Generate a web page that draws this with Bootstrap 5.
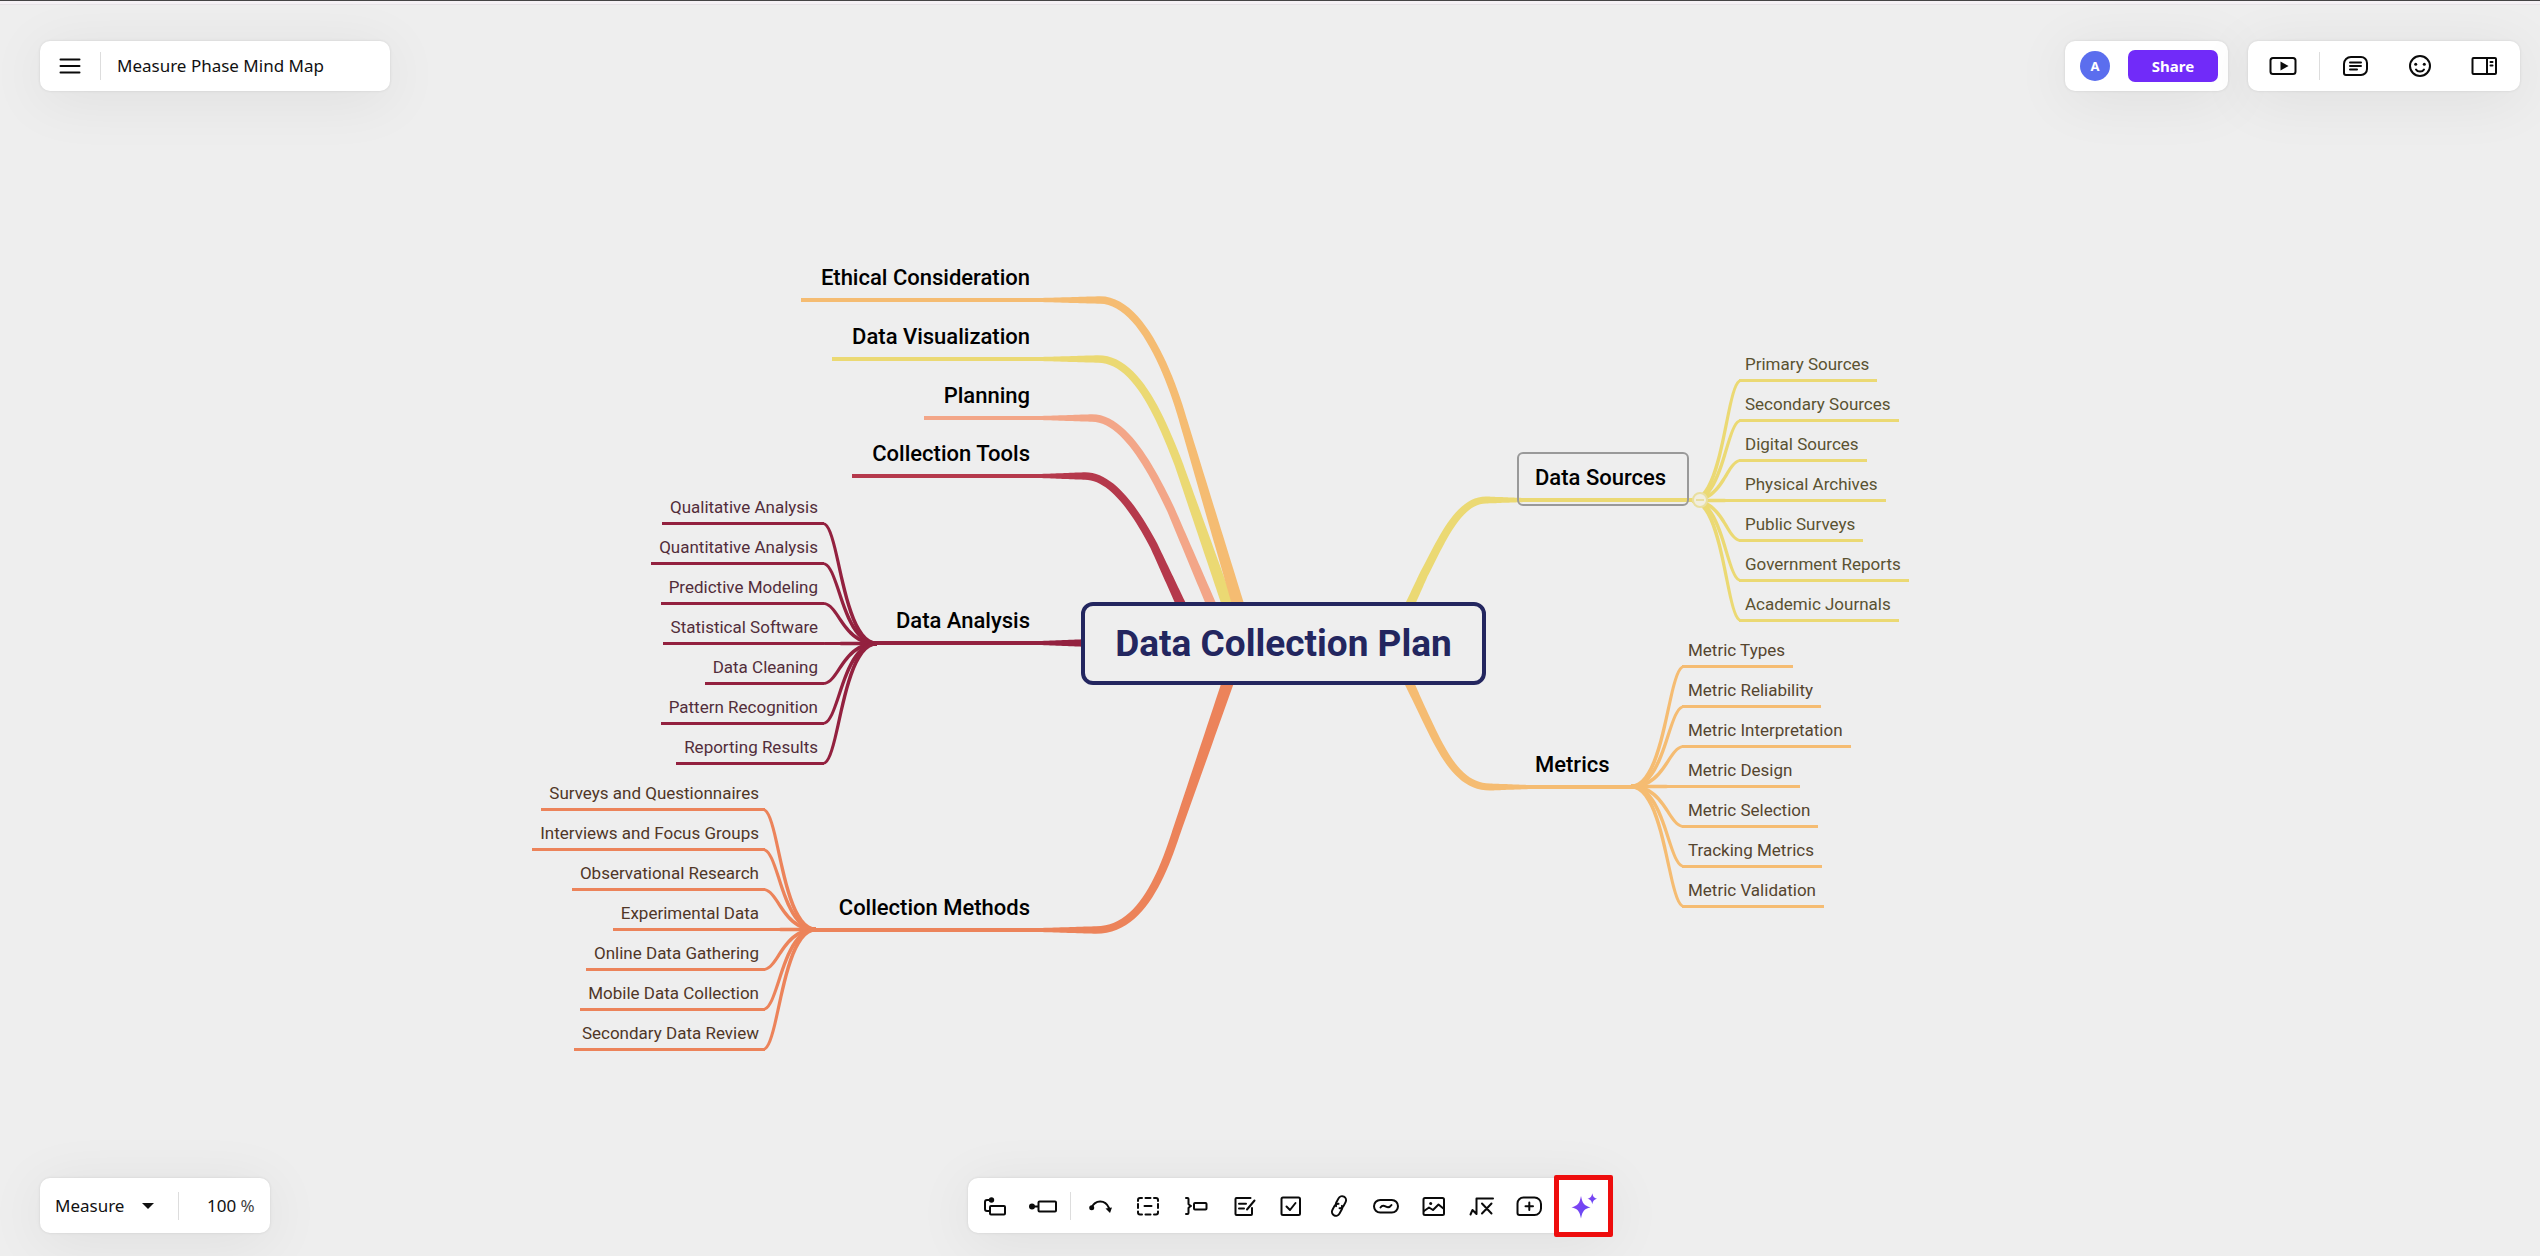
<!DOCTYPE html>
<html lang="en">
<head>
<meta charset="utf-8">
<meta name="viewport" content="width=device-width, initial-scale=1">
<title>Measure Phase Mind Map</title>
<link href="https://cdn.jsdelivr.net/npm/bootstrap@5.3.0/dist/css/bootstrap.min.css" rel="stylesheet">
<style>
  body { background: #eee; color: #111; font-family: "Noto Sans", "Open Sans", sans-serif; font-size: 17px; line-height: 24px; }
  .app { overflow: hidden; }
  .top-strip { height: 5px; border-top: 1px solid #444; background: #f5f1f5; border-bottom: 1px solid #e6e2e6; }
  .app-header { padding: 36px 20px 1px 40px; }
  .app-footer { display: grid; grid-template-columns: 1fr auto 1fr; padding: 0 0 23px 40px; }
  .app-header, .app-footer { z-index: 2; }
  .panel { background: #fff; border-radius: 10px; box-shadow: 0 0 3px rgba(0,0,0,.1), 0 8px 60px rgba(0,0,0,.07); }
  .app-header .panel { height: 50px; }
  .app-footer .panel { height: 55px; }
  .title-panel { width: 350px; }
  .header-right { gap: 20px; }
  .share-panel { width: 163px; padding: 0 10px 0 15px; }
  .view-panel { padding: 0 4px 0 3px; }
  .sheet-panel { width: 230px; }
  .edit-panel { width: 644px; padding-left: 3px; }
  .vline { width: 1px; height: 28px; background: #ddd; flex: none; }
  .edit-line { margin: 0 6px 0 3px; }
  .doc-title { font-size: 17px; line-height: 24px; margin: 0; font-weight: 400; }
  .tool { border: 0; padding: 0; border-radius: 6px; color: #111; display: flex; align-items: center; justify-content: center; height: 44px; flex: none; }
  .tool svg { fill: none; stroke: #0a0a0a; stroke-width: 2; stroke-linecap: round; stroke-linejoin: round; }
  .tool .solid { fill: #0a0a0a; stroke: none; }
  .menu-tool { width: 60px; }
  .view-tool { width: 64px; }
  .edit-tool { width: 48px; }
  .insert-tools { width: 476px; flex: none; }
  .ai-tool { width: 59px; height: 62px; margin: 0 -1px 0 1px; border: 5px solid #ee0d0d; border-radius: 2px; background: #fff; }
  .ai-tool svg { stroke: none; }
  .avatar { width: 30px; height: 30px; background: #5b6eee; color: #fff; font-size: 13px; font-weight: 700; }
  .btn-share { width: 90px; height: 32px; padding: 0; border-radius: 7px; background: #712bf9; color: #fff; font-size: 15px; font-weight: 700; border: 0; }
  .btn-share:hover { background: #5f1fe0; color: #fff; }
  .sheet-select { appearance: none; border: 0; background: none; padding: 0 0 0 15px; width: 138px; height: 44px; color: #111; }
  .sheet-caret { position: absolute; left: 102px; top: 18px; pointer-events: none; }
  .zoom-level { padding-left: 28px; }
  .zoom-level span { color: #444; }

  .world { position: absolute; left: calc(50% - 1270px); top: calc(50% - 635px); width: 0; height: 0; font-family: Roboto, sans-serif; }
  .world svg { position: absolute; left: 0; top: 0; overflow: visible; }
  .map-node { position: absolute; white-space: nowrap; }
  .root-node { left: 1081px; top: 602px; height: 83px; width: 405px; border: 4px solid #23265f; border-radius: 12px; background: #eee; color: #23265f; font-size: 37px; line-height: 44px; font-weight: 700; }
  .topic { font-size: 22px; line-height: 28px; font-weight: 500; color: #000; padding: 2px 15px 6px; border-bottom: 4px solid var(--tone); }
  .topic-left { right: -1045px; padding-left: 20px; }
  .topic-right { left: 1520px; }
  .leaf-list { gap: 10px; width: max-content; }
  .leaf { font-size: 17px; line-height: 24px; padding: 0 6px 3px 8px; border-bottom: 3px solid var(--tone); color: var(--ink); }
  .align-items-start .leaf { padding: 0 8px 3px 6px; }
  .selected-frame { left: 1517px; top: 452px; width: 172px; height: 54px; border: 2px solid #999; border-radius: 6px; }

  .tone-sand { --tone: #f5bc72; --ink: #55452f; }
  .tone-lemon { --tone: #ebd973; --ink: #5a5231; }
  .tone-salmon { --tone: #f3a688; }
  .tone-brick { --tone: #b5394c; }
  .tone-wine { --tone: #93213f; --ink: #522d3a; }
  .tone-coral { --tone: #ec835a; --ink: #503627; }

  .at-ethical { top: 262px; }
  .at-visual { top: 321px; }
  .at-planning { top: 380px; }
  .at-tools { top: 438px; }
  .at-analysis { top: 605px; }
  .at-methods { top: 892px; }
  .at-sources { top: 462px; }
  .at-metrics { top: 749px; }
  .leaves-analysis { right: -824px; top: 495px; }
  .leaves-methods { right: -765px; top: 781px; }
  .leaves-sources { left: 1739px; top: 352px; }
  .leaves-metrics { left: 1682px; top: 638px; }
</style>
<script src="https://cdn.jsdelivr.net/npm/bootstrap@5.3.0/dist/js/bootstrap.bundle.min.js"></script>
</head>
<body>
<div class="app vh-100 d-flex flex-column position-relative">
  <div class="top-strip"></div>
  <header class="app-header d-flex justify-content-between position-relative">
    <div class="panel title-panel d-flex align-items-center">
      <button class="btn tool menu-tool" type="button" aria-label="Menu">
        <svg width="28" height="28"><path d="M4.500 7.500h19M4.500 14h19M4.500 20.500h19"/></svg>
      </button>
      <div class="vline"></div>
      <h1 class="doc-title ps-3">Measure Phase Mind Map</h1>
    </div>
    <div class="header-right d-flex">
      <div class="panel share-panel d-flex align-items-center justify-content-between">
        <span class="avatar rounded-circle d-flex align-items-center justify-content-center">A</span>
        <button class="btn btn-share" type="button">Share</button>
      </div>
      <div class="panel view-panel d-flex align-items-center">
        <button class="btn tool view-tool" type="button" aria-label="Present">
          <svg width="28" height="28"><rect x="1.500" y="6" width="25" height="16" rx="2.500"/><path class="solid" d="M11.500 9.500v9l8-4.500z"/></svg>
        </button>
        <div class="vline mx-1"></div>
        <button class="btn tool view-tool" type="button" aria-label="Comments">
          <svg width="28" height="28"><path d="M2 12a7 7 0 0 1 7-7h10a6 6 0 0 1 6 6v6a6 6 0 0 1-6 6H4a2 2 0 0 1-2-2z"/><path d="M8 10.500h11M8 14h11M8 17.500h7"/></svg>
        </button>
        <button class="btn tool view-tool" type="button" aria-label="Stickers">
          <svg width="28" height="28"><circle cx="14" cy="14" r="10"/><path d="M10 17.500c1.500 2.700 6.500 2.700 8 0"/><circle class="solid" cx="9.700" cy="12.300" r="1.500"/><circle class="solid" cx="18.300" cy="12.300" r="1.500"/></svg>
        </button>
        <button class="btn tool view-tool" type="button" aria-label="Format panel">
          <svg width="28" height="28"><rect x="2.500" y="6" width="23.500" height="16" rx="1"/><path d="M17 6v16M20.500 10h2M20.500 13.500h2"/></svg>
        </button>
      </div>
    </div>
  </header>

  <main class="flex-grow-1 position-relative">
    <div class="world">
      <svg id="links" width="1" height="1" aria-hidden="true"></svg>

      <div class="map-node topic topic-left tone-sand at-ethical">Ethical Consideration</div>
      <div class="map-node topic topic-left tone-lemon at-visual">Data Visualization</div>
      <div class="map-node topic topic-left tone-salmon at-planning">Planning</div>
      <div class="map-node topic topic-left tone-brick at-tools">Collection Tools</div>
      <div class="map-node topic topic-left tone-wine at-analysis">Data Analysis</div>
      <div class="map-node topic topic-left tone-coral at-methods">Collection Methods</div>
      <div class="map-node topic topic-right tone-lemon at-sources">Data Sources</div>
      <div class="map-node topic topic-right tone-sand at-metrics">Metrics</div>

      <div class="map-node leaf-list d-flex flex-column align-items-end tone-wine leaves-analysis">
        <div class="leaf">Qualitative Analysis</div>
        <div class="leaf">Quantitative Analysis</div>
        <div class="leaf">Predictive Modeling</div>
        <div class="leaf">Statistical Software</div>
        <div class="leaf">Data Cleaning</div>
        <div class="leaf">Pattern Recognition</div>
        <div class="leaf">Reporting Results</div>
      </div>
      <div class="map-node leaf-list d-flex flex-column align-items-end tone-coral leaves-methods">
        <div class="leaf">Surveys and Questionnaires</div>
        <div class="leaf">Interviews and Focus Groups</div>
        <div class="leaf">Observational Research</div>
        <div class="leaf">Experimental Data</div>
        <div class="leaf">Online Data Gathering</div>
        <div class="leaf">Mobile Data Collection</div>
        <div class="leaf">Secondary Data Review</div>
      </div>
      <div class="map-node leaf-list d-flex flex-column align-items-start tone-lemon leaves-sources">
        <div class="leaf">Primary Sources</div>
        <div class="leaf">Secondary Sources</div>
        <div class="leaf">Digital Sources</div>
        <div class="leaf">Physical Archives</div>
        <div class="leaf">Public Surveys</div>
        <div class="leaf">Government Reports</div>
        <div class="leaf">Academic Journals</div>
      </div>
      <div class="map-node leaf-list d-flex flex-column align-items-start tone-sand leaves-metrics">
        <div class="leaf">Metric Types</div>
        <div class="leaf">Metric Reliability</div>
        <div class="leaf">Metric Interpretation</div>
        <div class="leaf">Metric Design</div>
        <div class="leaf">Metric Selection</div>
        <div class="leaf">Tracking Metrics</div>
        <div class="leaf">Metric Validation</div>
      </div>

      <div class="map-node selected-frame"></div>
      <svg width="1" height="1" aria-hidden="true"><circle cx="1700" cy="500" r="7" fill="#f1eee0" stroke="#e9dfa0" stroke-width="2"/><path d="M1696 500h8" stroke="#e9dfa0" stroke-width="2"/></svg>
      <div class="map-node root-node d-flex align-items-center justify-content-center">Data Collection Plan</div>
    </div>
  </main>

  <footer class="app-footer position-relative">
    <div class="panel sheet-panel d-flex align-items-center">
      <div class="position-relative">
        <select class="sheet-select" aria-label="Sheet"><option>Measure</option></select>
        <svg class="sheet-caret" width="12" height="8" aria-hidden="true"><path d="M0 1h12l-6 6z" fill="#111"/></svg>
      </div>
      <div class="vline"></div>
      <div class="zoom-level">100 <span>%</span></div>
    </div>
    <div class="panel edit-panel d-flex align-items-center">
      <button class="btn tool edit-tool" type="button" aria-label="Topic">
        <svg width="28" height="28"><path d="M10 8H6a2 2 0 0 0-2 2v7a2 2 0 0 0 2 2h3"/><rect x="9" y="14" width="15" height="8.500" rx="1"/><circle class="solid" cx="10.500" cy="8" r="2.700"/></svg>
      </button>
      <button class="btn tool edit-tool" type="button" aria-label="Subtopic">
        <svg width="28" height="28"><path d="M3 14.500h6"/><rect x="9.500" y="9.500" width="17.500" height="10" rx="1"/><circle class="solid" cx="3" cy="14.500" r="3"/></svg>
      </button>
      <div class="vline edit-line"></div>
      <div class="insert-tools d-flex">
        <button class="btn tool flex-fill" type="button" aria-label="Relationship">
          <svg width="28" height="28"><path d="M4.700 15.500C8 8 18 7 22 16"/><circle class="solid" cx="4.700" cy="15.700" r="2.500"/><path class="solid" d="M18.500 16.500l6.500-1-2 5.500z"/></svg>
        </button>
        <button class="btn tool flex-fill" type="button" aria-label="Boundary">
          <svg width="28" height="28"><path d="M4 9V8a2 2 0 0 1 2-2h2M11.500 6h5M20 6h2a2 2 0 0 1 2 2v1M24 12v4M24 19.500v1a2 2 0 0 1-2 2h-2M16.500 22.500h-5M8 22.500H6a2 2 0 0 1-2-2v-1M4 16v-4M10.500 14h7"/></svg>
        </button>
        <button class="btn tool flex-fill" type="button" aria-label="Summary">
          <svg width="28" height="28"><path d="M4 6h1.500a1 1 0 0 1 1 1v5l2 2-2 2v5a1 1 0 0 1-1 1H4M8 14h1"/><rect x="12" y="11" width="12.500" height="6.500" rx="1"/></svg>
        </button>
        <button class="btn tool flex-fill" type="button" aria-label="Note">
          <svg width="28" height="28"><path d="M20.500 6h-14a1 1 0 0 0-1 1v15a1 1 0 0 0 1 1H21a1 1 0 0 0 1-1v-6M9 11.700h7M9 16.500h5M24.500 8.500L17 17.500"/></svg>
        </button>
        <button class="btn tool flex-fill" type="button" aria-label="To-do">
          <svg width="28" height="28"><rect x="4.500" y="5.500" width="18.500" height="17.500" rx="1.500"/><path d="M9.500 14.500l3.500 3.500 5.500-7"/></svg>
        </button>
        <button class="btn tool flex-fill" type="button" aria-label="Link">
          <svg width="28" height="28"><g transform="rotate(28 14 14)"><path d="M11.500 15.500a4 4 0 0 1-1.500-3V7.500a4 4 0 0 1 8 0v4.500a4 4 0 0 1-2.500 3.700"/><path d="M16.500 12.500a4 4 0 0 1 1.500 3v5a4 4 0 0 1-8 0V16a4 4 0 0 1 2.500-3.700"/></g></svg>
        </button>
        <button class="btn tool flex-fill" type="button" aria-label="Label">
          <svg width="28" height="28"><rect x="2" y="8" width="24" height="12.500" rx="6.200"/><path d="M8.500 15.500c2-3 4-1.500 5.500-.8s3.500 1.300 5.500-1.700"/></svg>
        </button>
        <button class="btn tool flex-fill" type="button" aria-label="Image">
          <svg width="28" height="28"><rect x="3.500" y="6" width="20.500" height="17" rx="1.500"/><path d="M4 19l5-3.500 4 2.500 5.500-5.500 5.500 4.500"/><circle class="solid" cx="10.700" cy="11.500" r="1.500"/></svg>
        </button>
        <button class="btn tool flex-fill" type="button" aria-label="Equation">
          <svg width="28" height="28"><path d="M2.500 22.500L4.500 18l4 4V6.500H25M14 11.500l9.500 10M23.500 11.500l-9.500 10"/></svg>
        </button>
        <button class="btn tool flex-fill" type="button" aria-label="More">
          <svg width="28" height="28"><path d="M2.500 11.500a6 6 0 0 1 6-6h11a6.500 6.500 0 0 1 6.500 6.500v4.500a6.500 6.500 0 0 1-6.500 6.500h-15a2 2 0 0 1-2-2zM14.300 10.500v7.500M10.500 14.200H18"/></svg>
        </button>
      </div>
      <button class="btn tool ai-tool" type="button" aria-label="AI assistant">
        <svg width="28" height="28"><defs><linearGradient id="ai" x1="0" y1="0" x2="1" y2="1"><stop offset="0" stop-color="#8f3ff2"/><stop offset="1" stop-color="#5a4cf5"/></linearGradient></defs><path fill="url(#ai)" d="M11 4c1.500 7.500 3 9.600 9.500 11.300-6.500 1.700-8 3.800-9.500 11.300-1.500-7.500-3-9.600-9.500-11.300C8 13.600 9.500 11.500 11 4z"/><path fill="url(#ai)" d="M22.300 1.200c.8 3.600 1.600 4.600 4.900 5.500-3.300.9-4.100 1.900-4.900 5.500-.8-3.600-1.600-4.600-4.900-5.500 3.300-.9 4.100-1.900 4.900-5.500z"/></svg>
      </button>
    </div>
  </footer>
</div>
<script>
  // Tapered connectors: each is a list of cubic segments with a width at either end.
  const cubic = (p, t) => {
    const u = 1 - t, a = u*u*u, b = 3*u*u*t, c = 3*u*t*t, d = t*t*t;
    return [a*p[0] + b*p[2] + c*p[4] + d*p[6], a*p[1] + b*p[3] + c*p[5] + d*p[7]];
  };
  const line = (x1, y1, x2, y2) => [x1, y1, x1 + (x2-x1)/3, y1 + (y2-y1)/3, x1 + 2*(x2-x1)/3, y1 + 2*(y2-y1)/3, x2, y2];
  const svg = document.getElementById('links');
  function ribbon(color, segs) {
    const left = [], right = [];
    for (const [p, w0, w1] of segs) {
      for (let i = 0; i <= 24; i++) {
        const t = i / 24, [x, y] = cubic(p, t);
        const [ax, ay] = cubic(p, Math.max(0, t - .01)), [bx, by] = cubic(p, Math.min(1, t + .01));
        const n = Math.hypot(bx - ax, by - ay), h = (w0 + (w1 - w0) * t) / 2;
        const nx = -(by - ay) / n * h, ny = (bx - ax) / n * h;
        left.push([x + nx, y + ny]); right.unshift([x - nx, y - ny]);
      }
    }
    const el = document.createElementNS('http://www.w3.org/2000/svg', 'path');
    el.setAttribute('d', 'M' + left.concat(right).map(q => q[0].toFixed(2) + ' ' + q[1].toFixed(2)).join('L') + 'Z');
    el.setAttribute('fill', color);
    svg.appendChild(el);
  }
  const C = { sand: '#f5bc72', lemon: '#ebd973', salmon: '#f3a688', brick: '#b5394c', wine: '#93213f', coral: '#ec835a' };
  ribbon(C.brick, [[line(1040,476,1085,476),4,7.5],[[1085,476,1112,476,1136,512,1154,546],7.5,8],[line(1154,546,1184,611),8,10]]);
  ribbon(C.salmon, [[line(1040,418,1092,418),4,7.5],[[1092,418,1124,418,1151,468,1171,510],7.5,8],[line(1171,510,1214,611),8,10]]);
  ribbon(C.lemon, [[line(1040,359,1098,359),4,7.5],[[1098,359,1134,359,1158,410,1179,465],7.5,8.5],[line(1179,465,1230,611),8.5,12]]);
  ribbon(C.sand, [[line(1040,300,1100,300),4,7.5],[[1100,300,1138,300,1167,365,1183,420],7.5,8],[line(1183,420,1240,611),8,12]]);
  ribbon(C.wine, [[line(1040,643,1090,643),4,8]]);
  ribbon(C.coral, [[line(1040,930,1096,930),4,7.5],[[1096,930,1138,930,1160,882,1176,833],7.5,8.5],[line(1176,833,1230,676),8.5,12]]);
  ribbon(C.lemon, [[line(1407,611,1424,574),9.5,8.5],[[1424,574,1441,542,1458,500,1486,500],8.5,7],[line(1486,500,1525,500),7,4]]);
  ribbon(C.sand, [[line(1406,676,1420,706),9.5,8.5],[[1420,706,1440,748,1456,787,1490,787],8.5,7],[line(1490,787,1530,787),7,4]]);
  ribbon(C.wine, [[line(877,643,1040,643),4,4]]);
  ribbon(C.coral, [[line(815,930,1040,930),4,4]]);
  ribbon(C.lemon, [[line(1640,500,1696,500),4,4]]);
  ribbon(C.sand, [[line(1600,787,1634,787),4,4]]);
  const fan = (color, x, y, tx, ys) => ys.forEach(ty => {
    const dx = tx - x;
    ribbon(color, [[[x, y, x + dx*.65, y, x + dx*.7, ty, tx, ty], 4, 2.7]]);
  });
  const steps = y => [-3,-2,-1,0,1,2,3].map(k => y + k*40);
  fan(C.wine, 877, 643.5, 823, steps(643.5));
  fan(C.coral, 816, 929.5, 763, steps(929.5));
  fan(C.lemon, 1692, 500.5, 1741, steps(500.5));
  fan(C.sand, 1631, 786.5, 1684, steps(786.5));
</script>
</body>
</html>
